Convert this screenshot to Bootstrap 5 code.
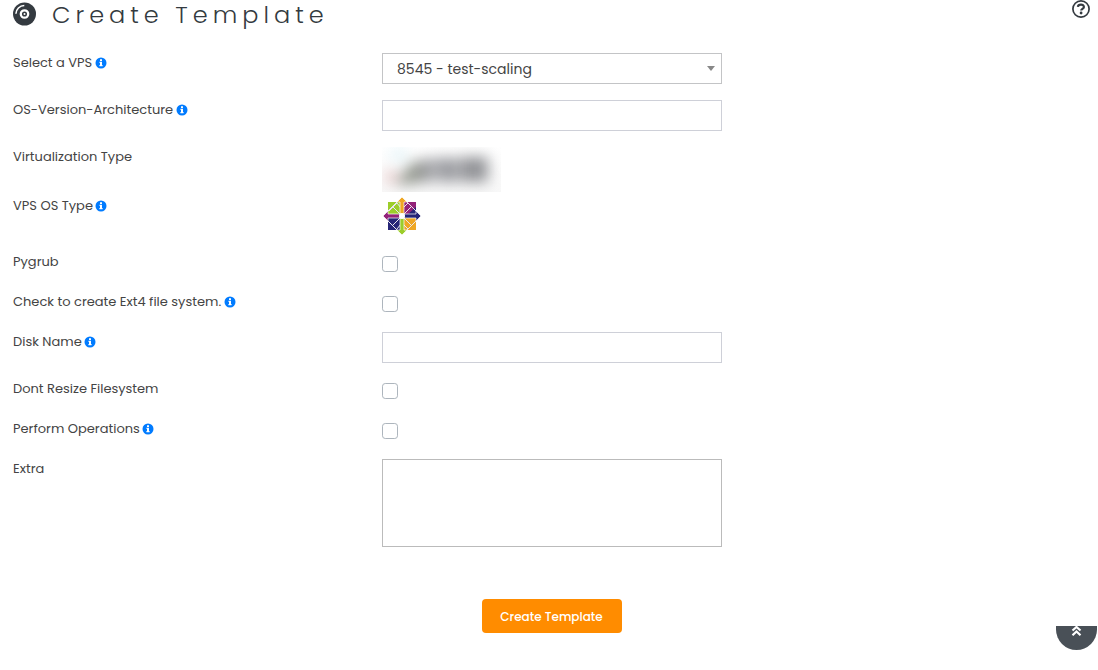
<!DOCTYPE html>
<html lang="en">
<head>
<meta charset="utf-8">
<meta name="viewport" content="width=device-width, initial-scale=1">
<title>Create Template</title>
<link rel="stylesheet" href="https://cdn.jsdelivr.net/npm/bootstrap@5.3.0/dist/css/bootstrap.min.css">
<style>
  body { font-family: Poppins, Inter, sans-serif; font-size: 13px; line-height: 20px; color: #444; background: #fff; }
  .page { padding: 0 8px 0 13px; }
  .page-head { margin-bottom: 20px; color: #333a40; }
  .page-title { font-size: 24px; line-height: 36px; font-weight: 300; letter-spacing: 5px; margin-top: -3px; }
  .form-line { --bs-gutter-x: 30px; margin-bottom: 16px; }
  .info { color: #007bff; line-height: 0; margin-left: -1px; }
  .field { max-width: 340px; height: 31px; border: 1px solid #ced0d8; border-radius: 0; padding: 1px 14px 0; font-size: 14px; color: #444; box-shadow: none; }
  .field-select { border-color: #c3c4c6; background: #fff url("data:image/svg+xml,%3Csvg xmlns='http://www.w3.org/2000/svg' width='8' height='5'%3E%3Cpath d='M0 0h8L4 5z' fill='%23888'/%3E%3C/svg%3E") no-repeat right 6px center / 8px 5px; }
  textarea.field { height: 88px; border-color: #bbb; resize: none; }
  .tick { height: 24px; padding-top: 4px; }
  .tick .form-check-input { display: block; width: 16px; height: 16px; margin: 0; border-color: #adb5bd; }
  .btn-create { width: 140px; height: 34px; padding: 2px 0 0; border: 0; border-radius: 4px; background: #ff8c00; color: #fff; font-size: 12px; font-weight: 500; }
  .btn-create:hover { background: #e67e00; color: #fff; }
  .actions { padding-top: 36px; }
  .to-top { right: 1px; bottom: 20px; }
</style>
</head>
<body>
<svg class="d-none" aria-hidden="true">
  <symbol id="i-info" viewBox="0 0 12 12"><circle cx="6" cy="6" r="5.500" fill="currentColor"/><path d="M5 2.300h2v1.600H5zM4.500 4.700H7v3.400h.6v1.200H4.400V8.100H5V5.900h-.5z" fill="#fff"/></symbol>
</svg>
<main class="container-fluid page">
  <header class="page-head d-flex justify-content-between align-items-start">
    <div class="d-flex">
      <svg class="me-3 flex-shrink-0" width="23" height="26" viewBox="0 0 23 26" aria-hidden="true">
        <circle cx="11.500" cy="14" r="11.500" fill="#343a40"/>
        <circle cx="11.500" cy="14" r="3.700" fill="none" stroke="#fff" stroke-width="2.300"/>
        <circle cx="11.500" cy="14" r="1" fill="#fff"/>
        <path d="M2.900 13.800a8.500 8.500 0 0 1 8.400-8.300" fill="none" stroke="#fff" stroke-width="1.600"/>
      </svg>
      <h1 class="page-title mb-0">Create Template</h1>
    </div>
    <a href="#" class="lh-1 text-reset" aria-label="Help">
      <svg class="d-block" width="18" height="18" viewBox="1 1 18 18"><circle cx="10" cy="10" r="8.100" fill="none" stroke="#343a40" stroke-width="1.700"/><path d="M6.900 7.800C7.200 4.900 12.900 4.700 12.900 7.900c0 2-2.700 2-2.700 3.700" fill="none" stroke="#343a40" stroke-width="2.200"/><circle cx="10.100" cy="14" r="1.400" fill="#343a40"/></svg>
    </a>
  </header>

  <form>
    <div class="row form-line">
      <div class="col-4"><label for="vps">Select a VPS</label> <span class="info"><svg width="12" height="12"><use href="#i-info"/></svg></span></div>
      <div class="col-8"><select id="vps" class="form-select field field-select"><option>8545 - test-scaling</option></select></div>
    </div>
    <div class="row form-line">
      <div class="col-4"><label for="os">OS-Version-Architecture</label> <span class="info"><svg width="12" height="12"><use href="#i-info"/></svg></span></div>
      <div class="col-8"><input id="os" type="text" class="form-control field"></div>
    </div>
    <div class="row form-line mb-1">
      <div class="col-4">Virtualization Type</div>
      <div class="col-8">
        <svg class="d-block" width="119" height="45" viewBox="0 0 119 45" role="img" aria-label="Virtualization type">
          <defs>
            <linearGradient id="haze" x1="0" y1="0" x2="0" y2="1"><stop offset="0" stop-color="#fff"/><stop offset="1" stop-color="#f8f8f8"/></linearGradient>
            <filter id="soft" x="-50%" y="-50%" width="200%" height="200%" color-interpolation-filters="sRGB"><feGaussianBlur stdDeviation="7"/></filter>
          </defs>
          <rect width="119" height="45" fill="url(#haze)"/>
          <g filter="url(#soft)">
            <ellipse cx="17" cy="8" rx="9" ry="7" fill="#e6f5f9"/>
            <ellipse cx="9" cy="30" rx="6" ry="7" fill="#e8c8c8"/>
            <path d="M14 35L32 14l11 3-1 18-23 3z" fill="#93978e"/>
            <path d="M39 12h14v23H39z" fill="#9c9da1"/>
            <path d="M54 11h22v24H56z" fill="#999a9f"/>
            <path d="M78 10h28v25H78z" fill="#929397"/>
          </g>
        </svg>
      </div>
    </div>
    <div class="row form-line">
      <div class="col-4">VPS OS Type <span class="info"><svg width="12" height="12"><use href="#i-info"/></svg></span></div>
      <div class="col-8">
        <svg class="d-block" width="40" height="40" viewBox="0 0 40 40" role="img" aria-label="CentOS">
          <path d="M6 6h13v13H6z" fill="#9ccd2a"/><path d="M21 6h13v13H21z" fill="#932279"/>
          <path d="M6 21h13v13H6z" fill="#262577"/><path d="M21 21h13v13H21z" fill="#efa724"/>
          <path d="M34 11v8h-9z" fill="#262577"/>
          <g fill="none" stroke="#e9e6ee" stroke-width="1"><path d="M10 10l9 9M30 10l-9 9M10 30l9-9M30 30l-9-9"/><path d="M15 6l-9 9M11 11l4-4 4 5M7 15l4-4M25 6l9 9M21 12l5-5M6 25l9 9M15 33l4-5M34 25l-9 9M21 28l5 5"/></g>
          <g stroke="#fff" stroke-width=".7">
            <path d="M20 1l5 5h-3v12h-4V6h-3z" fill="#efa724"/>
            <path d="M39 20l-5 5v-3H22v-4h12v-3z" fill="#262577"/>
            <path d="M20 39l-5-5h3V22h4v12h3z" fill="#9ccd2a"/>
            <path d="M1 20l5-5v3h12v4H6v3z" fill="#932279"/>
          </g>
          <circle cx="20" cy="20" r="3" fill="#fff"/>
        </svg>
      </div>
    </div>
    <div class="row form-line">
      <div class="col-4"><label for="pygrub">Pygrub</label></div>
      <div class="col-8 tick"><input id="pygrub" type="checkbox" class="form-check-input"></div>
    </div>
    <div class="row form-line">
      <div class="col-4"><label for="ext4">Check to create Ext4 file system.</label> <span class="info"><svg width="12" height="12"><use href="#i-info"/></svg></span></div>
      <div class="col-8 tick"><input id="ext4" type="checkbox" class="form-check-input"></div>
    </div>
    <div class="row form-line">
      <div class="col-4"><label for="disk">Disk Name</label> <span class="info"><svg width="12" height="12"><use href="#i-info"/></svg></span></div>
      <div class="col-8"><input id="disk" type="text" class="form-control field"></div>
    </div>
    <div class="row form-line">
      <div class="col-4"><label for="noresize">Dont Resize Filesystem</label></div>
      <div class="col-8 tick"><input id="noresize" type="checkbox" class="form-check-input"></div>
    </div>
    <div class="row form-line">
      <div class="col-4"><label for="ops">Perform Operations</label> <span class="info"><svg width="12" height="12"><use href="#i-info"/></svg></span></div>
      <div class="col-8 tick"><input id="ops" type="checkbox" class="form-check-input"></div>
    </div>
    <div class="row form-line">
      <div class="col-4"><label for="extra">Extra</label></div>
      <div class="col-8"><textarea id="extra" class="form-control field"></textarea></div>
    </div>
    <div class="text-center actions">
      <button type="button" class="btn btn-create">Create Template</button>
    </div>
  </form>
</main>
<button type="button" class="to-top position-fixed border-0 bg-transparent p-0 lh-1" aria-label="Back to top">
  <svg class="d-block" width="41" height="24" viewBox="0 0 41 24"><path d="M0 0h41v3.500a20.500 20.500 0 0 1-41 0z" fill="#495057"/><path d="M16.500 4.500l4-3.500 4 3.500M16.500 9.300l4-3.800 4 3.800" fill="none" stroke="#fff" stroke-width="2.200"/></svg>
</button>
<script src="https://cdn.jsdelivr.net/npm/bootstrap@5.3.0/dist/js/bootstrap.bundle.min.js"></script>
</body>
</html>
